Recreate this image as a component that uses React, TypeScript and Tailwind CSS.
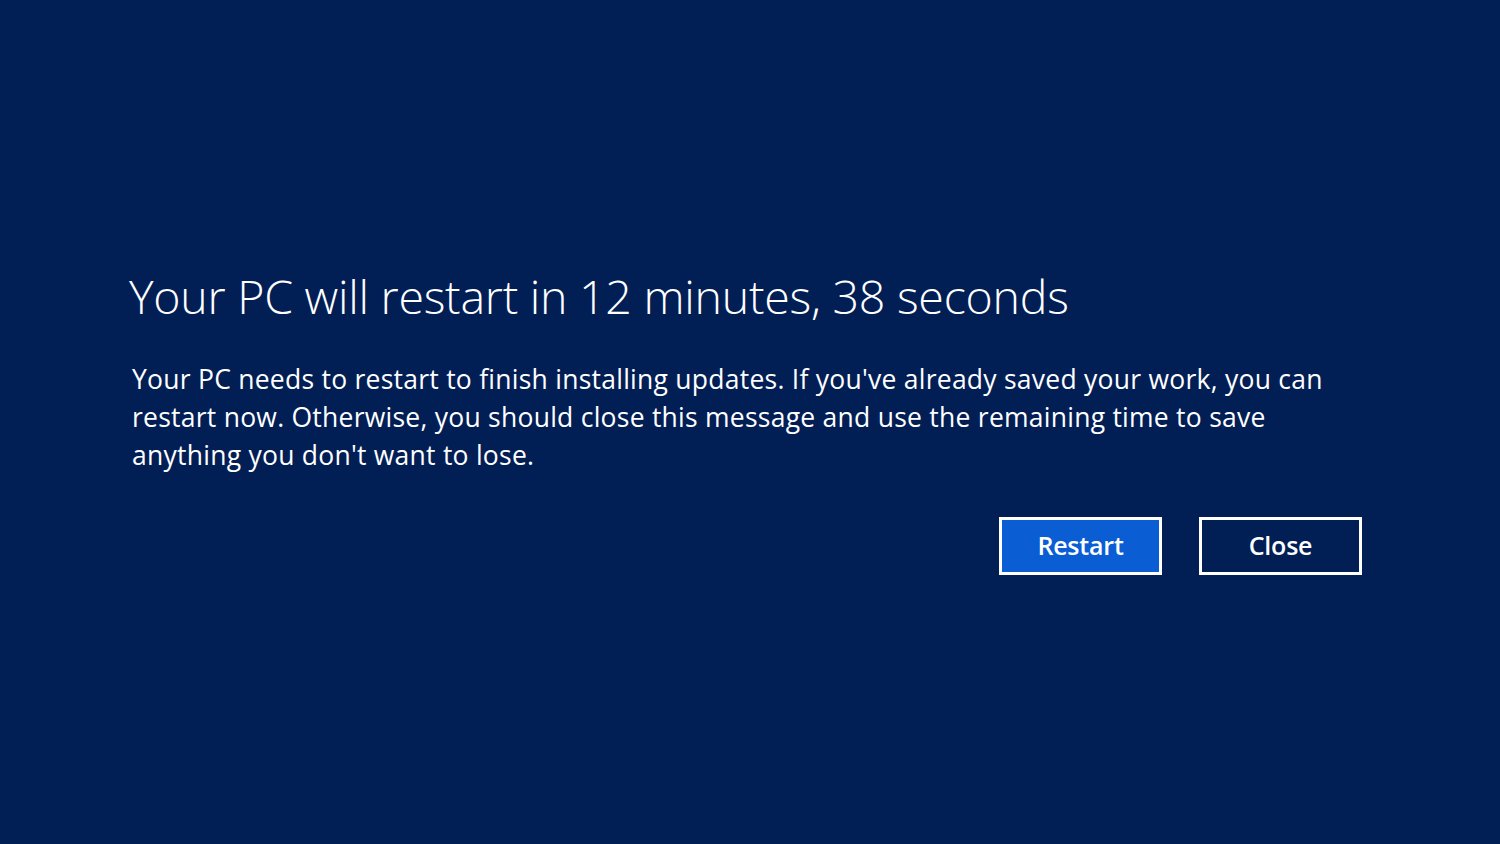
import React from "react";

export default function App() {
  return (
    <div
      className="w-[1500px] h-[844px] bg-[#011e55] text-white overflow-hidden"
      style={{ fontFamily: '"Open Sans", "Noto Sans", sans-serif' }}
    >
      <div className="pl-[129px] pt-[266px] w-[1362px]">
        <h1 className="text-[46.5px] leading-[60px] font-light tracking-[-0.25px] whitespace-nowrap">
          Your PC will restart in 12 minutes, 38 seconds
        </h1>
        <p className="mt-[34px] pl-[3px] text-[26.5px] leading-[38px] font-normal tracking-[0.25px] whitespace-nowrap">
          Your PC needs to restart to finish installing updates. If you've already saved your work, you can
          <br />
          restart now. Otherwise, you should close this message and use the remaining time to save
          <br />
          anything you don't want to lose.
        </p>
        <div className="mt-[43px] flex justify-end gap-[37px]">
          <button className="w-[163px] h-[58px] border-[3px] border-white bg-[#0b5dd4] text-[25px] font-semibold text-white tracking-[-0.2px]">
            Restart
          </button>
          <button className="w-[163px] h-[58px] border-[3px] border-white bg-[#011e55] text-[25px] font-semibold text-white tracking-[-0.2px]">
            Close
          </button>
        </div>
      </div>
    </div>
  );
}
